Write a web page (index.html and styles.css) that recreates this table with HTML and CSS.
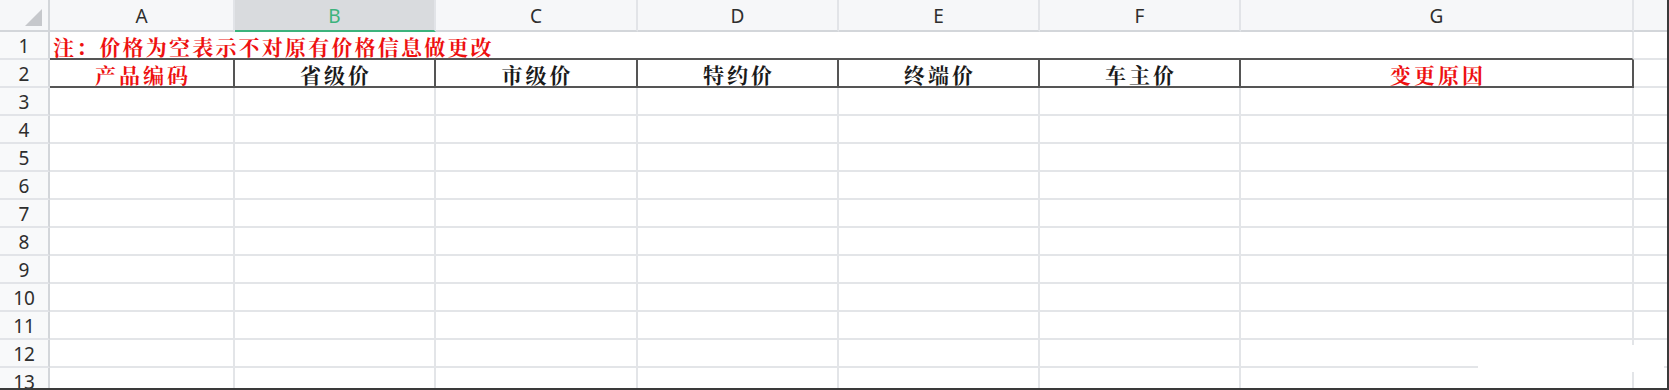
FILE: index.html
```html
<!DOCTYPE html>
<html lang="zh">
<head>
<meta charset="utf-8">
<title>Sheet</title>
<link rel="stylesheet" href="styles.css">
</head>
<body>
<div class="sheet">
  <div class="grid">
    <div class="corner"><svg class="tri" width="18" height="18" viewBox="0 0 18 18"><polygon points="0,17 17,17 17,0" fill="#c6c8cc"/></svg></div>
    <div class="ch">A</div>
    <div class="ch sel">B</div>
    <div class="ch">C</div>
    <div class="ch">D</div>
    <div class="ch">E</div>
    <div class="ch">F</div>
    <div class="ch">G</div>
    <div class="ch last"></div>

    <div class="rh">1</div>
    <div class="c note">注：价格为空表示不对原有价格信息做更改</div>
    <div class="c last"></div>

    <div class="rh">2</div>
    <div class="c hd red">产品编码</div>
    <div class="c hd">省级价</div>
    <div class="c hd">市级价</div>
    <div class="c hd">特约价</div>
    <div class="c hd">终端价</div>
    <div class="c hd">车主价</div>
    <div class="c hd red">变更原因</div>
    <div class="c last"></div>
  </div>
  <div class="grid body" id="body"></div>
  <div class="patch"></div>
</div>
<script src="script.js"></script>
</body>
</html>
```
FILE: script.js
```js
const body = document.getElementById('body');
let html = '';
for (let r = 3; r <= 13; r++) {
  html += '<div class="rh">' + r + '</div>';
  for (let c = 0; c < 7; c++) html += '<div class="c"></div>';
  html += '<div class="c last"></div>';
}
body.innerHTML = html;
```
FILE: styles.css
```css
* { box-sizing: border-box; }
html, body { margin: 0; padding: 0; background: #fff; }
body { width: 1669px; height: 390px; overflow: hidden; }

.sheet {
  position: relative;
  width: 1669px;
  height: 390px;
  border-right: 2px solid #3a3a3a;
  border-bottom: 2px solid #3a3a3a;
  overflow: hidden;
  font-family: "Noto Sans", "Liberation Sans", sans-serif;
}

.grid {
  display: grid;
  grid-template-columns: 50px 185px 201px 202px 201px 201px 201px 393px 33px;
  grid-template-rows: 32px 28px 28px;
}
.grid.body { grid-template-rows: repeat(11, 28px); }

.corner {
  background: #f6f7f9;
  border-right: 2px solid #d3d6da;
  border-bottom: 2px solid #d3d6da;
  position: relative;
}
.tri { position: absolute; left: 25px; top: 9px; }

.ch {
  background: #f6f7f9;
  border-right: 2px solid #e2e4e8;
  border-bottom: 2px solid #d3d6da;
  display: flex;
  align-items: center;
  justify-content: center;
  font-size: 19px;
  color: #2e2e2e;
  padding-top: 1px;
}
.ch.sel {
  background: #d9dbde;
  color: #3cb37c;
  border-bottom: 2px solid #3cb37c;
}
.ch.last { border-right: none; }

.rh {
  background: #f8f9fa;
  border-right: 2px solid #d3d6da;
  border-bottom: 2px solid #e2e4e8;
  display: flex;
  align-items: center;
  justify-content: center;
  font-size: 19px;
  color: #2e2e2e;
  padding-top: 1px;
}

.c {
  border-right: 2px solid #e3e5e8;
  border-bottom: 2px solid #e3e5e8;
}
.c.last { border-right: none; }

.note {
  grid-column: span 7;
  border-right: 2px solid #e3e5e8;
  border-bottom: 2px solid #555;
  color: #ee1111;
  font-family: "Noto Serif CJK SC", "Noto Sans CJK SC", serif;
  font-weight: 700;
  font-size: 21px;
  letter-spacing: 2.2px;
  line-height: 24px;
  padding-left: 3px;
  white-space: nowrap;
  display: flex;
  align-items: flex-end;
}

.hd {
  border-right: 2px solid #555;
  border-bottom: 2px solid #555;
  font-family: "Noto Serif CJK SC", "Noto Sans CJK SC", serif;
  font-weight: 700;
  font-size: 21px;
  letter-spacing: 3px;
  color: #1a1a1a;
  display: flex;
  align-items: center;
  justify-content: center;
  text-indent: 3px;
  line-height: 26px;
  padding-top: 2px;
}
.hd.red { color: #ee1111; }

.patch {
  position: absolute;
  left: 1478px;
  top: 345px;
  width: 186px;
  height: 27px;
  background: #fff;
}
```
